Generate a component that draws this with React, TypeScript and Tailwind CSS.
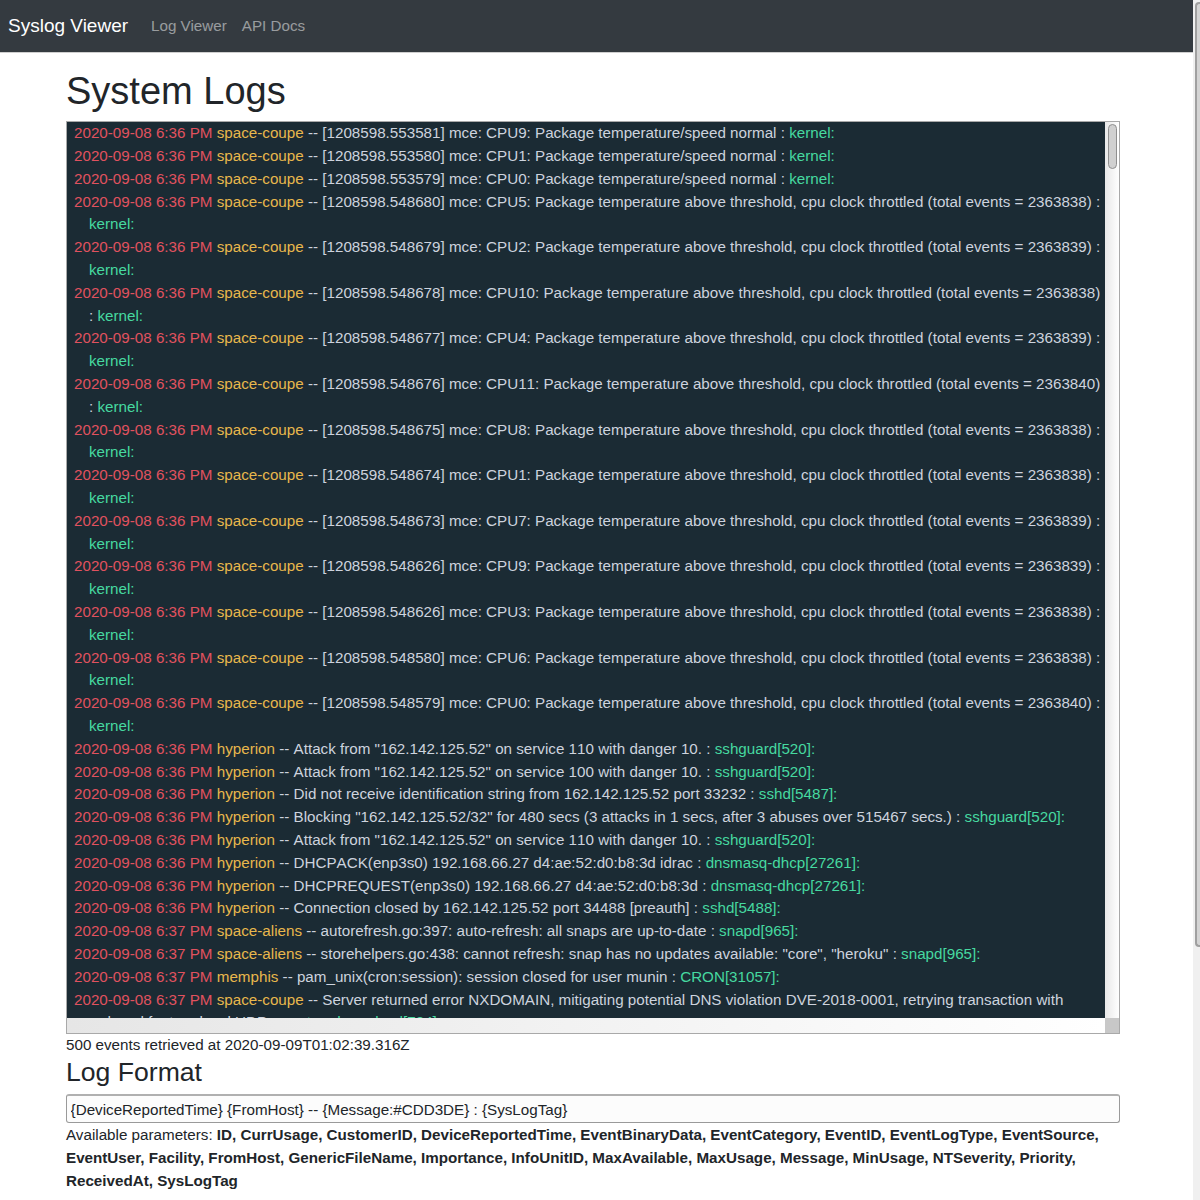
const logs: { d: string; h: string; m: string; t: string }[] = [
  ["6:36", "space-coupe", "[1208598.553581] mce: CPU9: Package temperature/speed normal", "kernel:"],
  ["6:36", "space-coupe", "[1208598.553580] mce: CPU1: Package temperature/speed normal", "kernel:"],
  ["6:36", "space-coupe", "[1208598.553579] mce: CPU0: Package temperature/speed normal", "kernel:"],
  ["6:36", "space-coupe", "[1208598.548680] mce: CPU5: Package temperature above threshold, cpu clock throttled (total events = 2363838)", "kernel:"],
  ["6:36", "space-coupe", "[1208598.548679] mce: CPU2: Package temperature above threshold, cpu clock throttled (total events = 2363839)", "kernel:"],
  ["6:36", "space-coupe", "[1208598.548678] mce: CPU10: Package temperature above threshold, cpu clock throttled (total events = 2363838)", "kernel:"],
  ["6:36", "space-coupe", "[1208598.548677] mce: CPU4: Package temperature above threshold, cpu clock throttled (total events = 2363839)", "kernel:"],
  ["6:36", "space-coupe", "[1208598.548676] mce: CPU11: Package temperature above threshold, cpu clock throttled (total events = 2363840)", "kernel:"],
  ["6:36", "space-coupe", "[1208598.548675] mce: CPU8: Package temperature above threshold, cpu clock throttled (total events = 2363838)", "kernel:"],
  ["6:36", "space-coupe", "[1208598.548674] mce: CPU1: Package temperature above threshold, cpu clock throttled (total events = 2363838)", "kernel:"],
  ["6:36", "space-coupe", "[1208598.548673] mce: CPU7: Package temperature above threshold, cpu clock throttled (total events = 2363839)", "kernel:"],
  ["6:36", "space-coupe", "[1208598.548626] mce: CPU9: Package temperature above threshold, cpu clock throttled (total events = 2363839)", "kernel:"],
  ["6:36", "space-coupe", "[1208598.548626] mce: CPU3: Package temperature above threshold, cpu clock throttled (total events = 2363838)", "kernel:"],
  ["6:36", "space-coupe", "[1208598.548580] mce: CPU6: Package temperature above threshold, cpu clock throttled (total events = 2363838)", "kernel:"],
  ["6:36", "space-coupe", "[1208598.548579] mce: CPU0: Package temperature above threshold, cpu clock throttled (total events = 2363840)", "kernel:"],
  ["6:36", "hyperion", "Attack from \"162.142.125.52\" on service 110 with danger 10.", "sshguard[520]:"],
  ["6:36", "hyperion", "Attack from \"162.142.125.52\" on service 100 with danger 10.", "sshguard[520]:"],
  ["6:36", "hyperion", "Did not receive identification string from 162.142.125.52 port 33232", "sshd[5487]:"],
  ["6:36", "hyperion", "Blocking \"162.142.125.52/32\" for 480 secs (3 attacks in 1 secs, after 3 abuses over 515467 secs.)", "sshguard[520]:"],
  ["6:36", "hyperion", "Attack from \"162.142.125.52\" on service 110 with danger 10.", "sshguard[520]:"],
  ["6:36", "hyperion", "DHCPACK(enp3s0) 192.168.66.27 d4:ae:52:d0:b8:3d idrac", "dnsmasq-dhcp[27261]:"],
  ["6:36", "hyperion", "DHCPREQUEST(enp3s0) 192.168.66.27 d4:ae:52:d0:b8:3d", "dnsmasq-dhcp[27261]:"],
  ["6:36", "hyperion", "Connection closed by 162.142.125.52 port 34488 [preauth]", "sshd[5488]:"],
  ["6:37", "space-aliens", "autorefresh.go:397: auto-refresh: all snaps are up-to-date", "snapd[965]:"],
  ["6:37", "space-aliens", "storehelpers.go:438: cannot refresh: snap has no updates available: \"core\", \"heroku\"", "snapd[965]:"],
  ["6:37", "memphis", "pam_unix(cron:session): session closed for user munin", "CRON[31057]:"],
  ["6:37", "space-coupe", "Server returned error NXDOMAIN, mitigating potential DNS violation DVE-2018-0001, retrying transaction with reduced feature level UDP.", "systemd-resolved[724]:"],
].map(([d, h, m, t]) => ({ d, h, m, t }));

export default function App() {
  return (
    <div className="flex w-[1200px] h-[1200px] overflow-hidden font-['Liberation_Sans',Arial,sans-serif] text-[15.2px] leading-[22.8px] text-[#212529] bg-white">
      <div className="w-[1193px] shrink-0">
        <nav className="h-[53px] flex items-center bg-[#343a40] border-b border-[#cfcfcf] px-2">
          <span className="text-[19px] text-white mr-[23px]">Syslog Viewer</span>
          <a className="text-[rgba(255,255,255,0.5)] mr-[15px]">Log Viewer</a>
          <a className="text-[rgba(255,255,255,0.5)]">API Docs</a>
        </nav>
        <main className="w-[1054.4px] ml-[66px]">
          <h1 className="text-[38px] leading-[45.6px] font-normal mt-[16px] mb-[6px]">System Logs</h1>
          <div className="flex flex-col h-[913px] border border-[#a9a9a9] bg-white">
            <div className="flex flex-1 min-h-0">
              <div className="flex-1 min-w-0 overflow-hidden bg-[#1b2b34] pt-[0.7px] pl-[7px] pr-[3px] [font-kerning:none]">
                {logs.map((l, i) => (
                  <div key={i} className="pl-[15px] -indent-[15px] text-[#cdd3de]">
                    <span className="text-[#e0525f]">2020-09-08 {l.d} PM</span>{" "}
                    <span className="text-[#e8b74c]">{l.h}</span> -- {l.m} :{" "}
                    <span className="text-[#46d9a0]">{l.t}</span>
                  </div>
                ))}
              </div>
              <div className="w-[14px] shrink-0 bg-gradient-to-r from-[#e8e8e8] to-white pt-[2.4px] pl-[2.5px]">
                <div className="w-[9px] h-[45px] rounded-full border border-[#8f8f8f] bg-[#d0d0d0]" />
              </div>
            </div>
            <div className="flex h-[15px] shrink-0">
              <div className="flex-1 bg-gradient-to-r from-[#e6e6e6] to-white" />
              <div className="w-[14px] bg-[#c8c8c8]" />
            </div>
          </div>
          <p>500 events retrieved at 2020-09-09T01:02:39.316Z</p>
          <h2 className="text-[26.6px] leading-[31.9px] font-normal mt-[1px] mb-[5px]">Log Format</h2>
          <input
            readOnly
            value="{DeviceReportedTime} {FromHost} -- {Message:#CDD3DE} : {SysLogTag}"
            className="block w-full h-[29px] border border-[#9a9a9a] border-t-2 border-t-[#b0b0b0] rounded-[3px] px-[3.6px] bg-[#fcfcfc] text-[#212529] outline-none"
          />
          <p className="mt-[1px]">
            Available parameters:{" "}
            <strong>
              ID, CurrUsage, CustomerID, DeviceReportedTime, EventBinaryData, EventCategory, EventID, EventLogType, EventSource, EventUser, Facility, FromHost, GenericFileName, Importance, InfoUnitID, MaxAvailable, MaxUsage, Message, MinUsage, NTSeverity, Priority, ReceivedAt, SysLogTag
            </strong>
          </p>
        </main>
      </div>
      <div className="w-[7px] shrink-0 bg-[#f0f0f0] pt-[2px] pl-[2px]">
        <div className="h-[945px] w-[5px] rounded-l-[4px] border-l-2 border-y-2 border-[#a0a0a0] bg-[#d4d4d4]" />
      </div>
    </div>
  );
}
